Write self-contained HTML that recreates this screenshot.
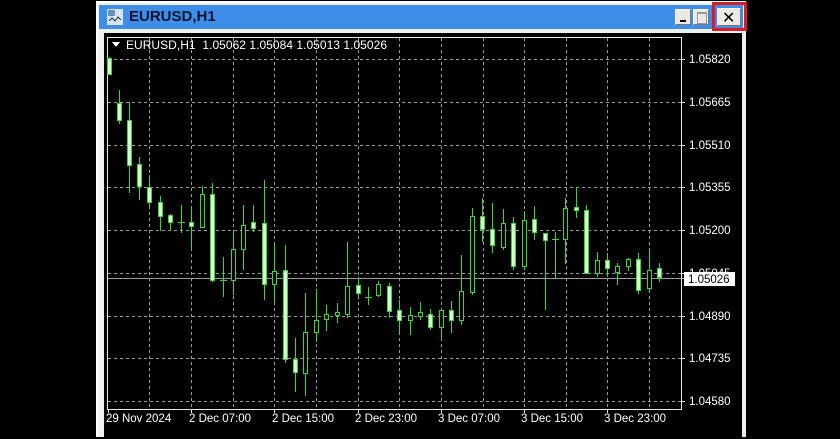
<!DOCTYPE html>
<html><head><meta charset="utf-8"><style>
html,body{margin:0;padding:0;background:#000;width:840px;height:436px;overflow:hidden;font-family:"Liberation Sans",sans-serif}
.win{position:absolute;left:96px;top:1px;width:650px;height:436px;background:#f0f0f0;border-left:2px solid #fff;border-top:2px solid #fff;box-sizing:border-box}
.title{position:absolute;left:1px;top:2px;width:644px;height:24px;background:#3d8ee8}
.title span{position:absolute;left:30px;top:3px;font-size:15px;font-weight:bold;color:#061230}
.btn{position:absolute;top:4px;width:16px;height:16px;background:#ece9e4;border:1px solid #fff;border-right-color:#777;border-bottom-color:#777;box-sizing:border-box}
.chart{position:absolute;left:6px;top:30px;width:638px;height:406px;background:#000}
svg rect,svg path,svg line{shape-rendering:crispEdges}
</style></head><body>
<div class="win">
 <div class="title">
  <svg style="position:absolute;left:8px;top:4px" width="16" height="16"><rect x="0" y="0" width="16" height="16" fill="#d8e4f4"/><rect x="1" y="1" width="7" height="6" fill="#6b8fc0"/><path d="M2 12 L5 9 L8 12 L11 8 L14 11" stroke="#234" fill="none"/></svg>
  <span>EURUSD,H1</span>
  <div class="btn" style="left:576px"><div style="position:absolute;left:4px;top:10px;width:6px;height:2px;background:#000"></div></div>
  <div class="btn" style="left:594px"><div style="position:absolute;left:3px;top:2px;width:8px;height:9px;border:1px solid #999;border-top-width:2px"></div></div>
  <div class="btn" style="left:618px;width:24px;height:18px;top:3px"><div style="position:absolute;left:4px;top:-1px;font-size:16px;color:#000">✕</div></div>
 </div>
 <div style="position:absolute;left:614px;top:-1px;width:35px;height:29px;border:3px solid #d91c24;box-sizing:border-box"></div>
 <div class="chart"></div>
</div>
<svg style="position:absolute;left:0;top:0" width="840" height="436" font-family="Liberation Sans, sans-serif" font-size="11.5">
<g stroke="#9a9a9a" stroke-dasharray="3,3" stroke-width="1">
<path d="M108 59.5H681M108 102.5H681M108 145.5H681M108 187.5H681M108 230.5H681M108 273.5H681M108 316.5H681M108 358.5H681M108 401.5H681"/>
<path d="M149.5 38V408M191.5 38V408M233.5 38V408M274.5 38V408M316.5 38V408M358.5 38V408M399.5 38V408M441.5 38V408M483.5 38V408M524.5 38V408M566.5 38V408M607.5 38V408M649.5 38V408"/>
</g>
<line x1="108" y1="278.5" x2="684" y2="278.5" stroke="#9a9a9a"/>
<rect x="107.5" y="37.5" width="574" height="372" fill="none" stroke="#e8e8e8"/>
<g stroke="#e8e8e8"><path d="M681 59.5h4M681 102.5h4M681 145.5h4M681 187.5h4M681 230.5h4M681 273.5h4M681 316.5h4M681 358.5h4M681 401.5h4M191.5 409v4M274.5 409v4M358.5 409v4M441.5 409v4M524.5 409v4M607.5 409v4M108.5 409v4"/></g>
<g fill="#fff">
<text x="689" y="63">1.05820</text><text x="689" y="106">1.05665</text><text x="689" y="149">1.05510</text><text x="689" y="191">1.05355</text><text x="689" y="234">1.05200</text><text x="689" y="277">1.05045</text><text x="689" y="320">1.04890</text><text x="689" y="362">1.04735</text><text x="689" y="405">1.04580</text>
<text x="106" y="422">29 Nov 2024</text><text x="189" y="422">2 Dec 07:00</text><text x="272" y="422">2 Dec 15:00</text><text x="355" y="422">2 Dec 23:00</text><text x="438" y="422">3 Dec 07:00</text><text x="521" y="422">3 Dec 15:00</text><text x="604" y="422">3 Dec 23:00</text>
<text x="126" y="49" font-size="12" textLength="261" lengthAdjust="spacing" xml:space="preserve">EURUSD,H1  1.05062 1.05084 1.05013 1.05026</text>
<path d="M112 42h8l-4 5z"/>
</g>
<rect x="684" y="272" width="51" height="14" fill="#fff"/>
<text x="688" y="283" fill="#000" font-size="11.5">1.05026</text>
<g stroke="#2fdc2f" stroke-width="1">
<path d="M109.5 57V75M119.5 90V124M129.5 102V193M139.5 157V200M149.5 175V208M160.5 196V231M170.5 214V231M181.5 205V233M191.5 206V248M202.5 186V228M212.5 183V282M223.5 257V297M233.5 230V295M243.5 205V270M253.5 205V232M264.5 180V300M274.5 245V302M285.5 245V363M295.5 338V392M305.5 293V396M316.5 289V342M326.5 305V331M337.5 303V323M347.5 242V318M358.5 277V296M368.5 287V305M378.5 281V297M389.5 283V318M399.5 300V333M410.5 307V335M420.5 302V320M430.5 309V330M441.5 308V340M451.5 301V333M461.5 255V325M472.5 208V295M482.5 198V242M492.5 203V253M503.5 209V250M513.5 217V270M524.5 211V270M534.5 206V240M545.5 233V310M555.5 232V278M565.5 198V264M576.5 188V218M586.5 205V274M597.5 252V277M607.5 253V277M617.5 263V285M628.5 258V271M638.5 253V294M649.5 250V293M659.5 263V282"/>
<path d="M178 222.5h7M220 280.5h7M365 297.5h7M552 239.5h7"/>
</g>
<g stroke="#2fdc2f" fill="#dcffd4">
<rect x="107.5" y="58.5" width="4" height="16"/><rect x="117.5" y="103.5" width="4" height="17"/><rect x="127.5" y="120.5" width="4" height="45"/><rect x="137.5" y="164.5" width="4" height="22"/><rect x="147.5" y="187.5" width="4" height="15"/><rect x="158.5" y="202.5" width="4" height="14"/><rect x="168.5" y="215.5" width="4" height="7"/><rect x="189.5" y="222.5" width="4" height="4"/><rect x="210.5" y="194.5" width="4" height="86"/><rect x="251.5" y="222.5" width="4" height="6"/><rect x="262.5" y="223.5" width="4" height="61"/><rect x="283.5" y="270.5" width="4" height="89"/><rect x="293.5" y="359.5" width="4" height="13"/><rect x="356.5" y="285.5" width="4" height="8"/><rect x="387.5" y="286.5" width="4" height="25"/><rect x="397.5" y="310.5" width="4" height="10"/><rect x="428.5" y="314.5" width="4" height="13"/><rect x="449.5" y="310.5" width="4" height="10"/><rect x="480.5" y="216.5" width="4" height="13"/><rect x="490.5" y="229.5" width="4" height="16"/><rect x="511.5" y="223.5" width="4" height="43"/><rect x="532.5" y="219.5" width="4" height="13"/><rect x="543.5" y="233.5" width="4" height="7"/><rect x="574.5" y="207.5" width="4" height="3"/><rect x="584.5" y="210.5" width="4" height="63"/><rect x="605.5" y="260.5" width="4" height="8"/><rect x="636.5" y="259.5" width="4" height="31"/><rect x="657.5" y="268.5" width="4" height="9"/>
</g>
<g stroke="#2fdc2f" fill="#000">
<rect x="200.5" y="194.5" width="4" height="33"/><rect x="231.5" y="249.5" width="4" height="31"/><rect x="241.5" y="225.5" width="4" height="24"/><rect x="272.5" y="271.5" width="4" height="13"/><rect x="303.5" y="332.5" width="4" height="41"/><rect x="314.5" y="320.5" width="4" height="12"/><rect x="324.5" y="314.5" width="4" height="5"/><rect x="335.5" y="312.5" width="4" height="3"/><rect x="345.5" y="286.5" width="4" height="28"/><rect x="376.5" y="284.5" width="4" height="11"/><rect x="408.5" y="315.5" width="4" height="5"/><rect x="418.5" y="312.5" width="4" height="4"/><rect x="439.5" y="310.5" width="4" height="17"/><rect x="459.5" y="291.5" width="4" height="29"/><rect x="470.5" y="216.5" width="4" height="76"/><rect x="501.5" y="223.5" width="4" height="24"/><rect x="522.5" y="220.5" width="4" height="46"/><rect x="563.5" y="208.5" width="4" height="31"/><rect x="595.5" y="260.5" width="4" height="13"/><rect x="615.5" y="266.5" width="4" height="6"/><rect x="626.5" y="259.5" width="4" height="7"/><rect x="647.5" y="270.5" width="4" height="18"/>
</g>
</svg>
</body></html>
